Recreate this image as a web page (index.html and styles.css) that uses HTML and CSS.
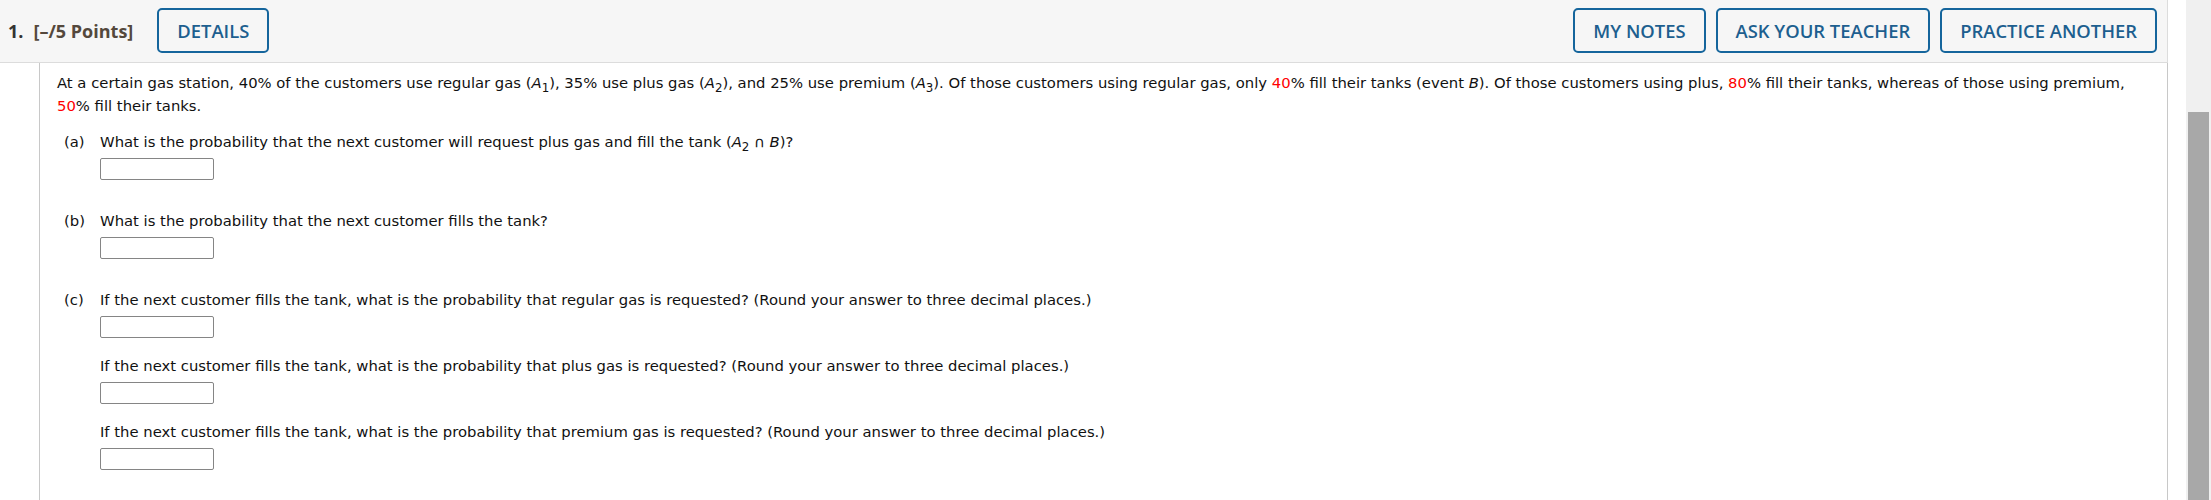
FILE: index.html
```html
<!DOCTYPE html>
<html>
<head>
<meta charset="utf-8">
<link rel="stylesheet" href="styles.css">
</head>
<body>
<div class="screen">
  <div class="page">
    <div class="header">
      <div class="title"><span class="num">1.</span><span class="pts">[–/5 Points]</span></div>
      <button class="btn">DETAILS</button>
      <div class="spacer"></div>
      <div class="actions">
        <button class="btn">MY NOTES</button>
        <button class="btn">ASK YOUR TEACHER</button>
        <button class="btn">PRACTICE ANOTHER</button>
      </div>
    </div>
    <div class="content">
      <p class="intro">At a certain gas station, 40% of the customers use regular gas (<i>A</i><sub>1</sub>), 35% use plus gas (<i>A</i><sub>2</sub>), and 25% use premium (<i>A</i><sub>3</sub>). Of those customers using regular gas, only <span class="red">40</span>% fill their tanks (event <i>B</i>). Of those customers using plus, <span class="red">80</span>% fill their tanks, whereas of those using premium, <span class="red">50</span>% fill their tanks.</p>
      <div class="part first">
        <div class="label">(a)</div>
        <div class="body">
          <div class="q">What is the probability that the next customer will request plus gas and fill the tank (<i>A</i><sub>2</sub> ∩ <i>B</i>)?</div>
          <div class="answer"></div>
        </div>
      </div>
      <div class="part">
        <div class="label">(b)</div>
        <div class="body">
          <div class="q">What is the probability that the next customer fills the tank?</div>
          <div class="answer"></div>
        </div>
      </div>
      <div class="part">
        <div class="label">(c)</div>
        <div class="body">
          <div class="q">If the next customer fills the tank, what is the probability that regular gas is requested? (Round your answer to three decimal places.)</div>
          <div class="answer"></div>
          <div class="q sub">If the next customer fills the tank, what is the probability that plus gas is requested? (Round your answer to three decimal places.)</div>
          <div class="answer"></div>
          <div class="q sub">If the next customer fills the tank, what is the probability that premium gas is requested? (Round your answer to three decimal places.)</div>
          <div class="answer"></div>
        </div>
      </div>
    </div>
  </div>
  <div class="gutter"></div>
  <div class="scrollbar"><div class="thumb"></div></div>
</div>
</body>
</html>
```
FILE: styles.css
```css
* { box-sizing: border-box; }
html, body { margin: 0; padding: 0; height: 500px; overflow: hidden; background: #fff; }
.screen { display: flex; height: 500px; }
.page { width: 2168px; flex: none; }
.header {
  display: flex;
  align-items: center;
  height: 63px;
  padding: 0 10px 1px 8px;
  background: #f6f6f6;
  border-bottom: 1px solid #dcdcdc;
  border-right: 1px solid #dcdcdc;
  font-family: "Open Sans", sans-serif;
}
.title { font-weight: 700; font-size: 18px; display: flex; gap: 10px; margin-right: 24px; }
.num { color: #333; }
.pts { color: #54483c; }
.spacer { flex: 1; }
.actions { display: flex; gap: 10px; }
.btn {
  height: 45px;
  padding: 0 18px;
  border: 2px solid #15659c;
  border-radius: 5px;
  background: transparent;
  color: #1d5f8f;
  font-family: "Open Sans", sans-serif;
  font-weight: 600;
  font-size: 18.4px;
}
.content {
  height: 437px;
  margin-left: 39px;
  border-left: 1px solid #c8c8c8;
  border-right: 1px solid #c8c8c8;
  padding: 8px 10px 0 17px;
  font-family: "DejaVu Sans", Verdana, sans-serif;
  font-size: 14.8px;
  line-height: 23px;
  color: #111;
}
.intro { margin: 0; }
.red { color: #ff0000; }
sub { font-size: 0.8em; vertical-align: -0.35em; line-height: 0; }
.part { display: flex; padding-left: 7px; margin-top: 29px; }
.part.first { margin-top: 13px; }
.label { width: 36px; flex: none; }
.body { flex: 1; }
.answer {
  width: 114px;
  height: 22px;
  margin-top: 5px;
  border: 1px solid #858585;
  border-radius: 2px;
  background: #fff;
}
.q.sub { margin-top: 16px; }
.gutter { width: 18px; flex: none; background: #fff; }
.scrollbar { width: 25px; flex: none; background: #f0f0f0; padding: 112px 2px 0 2px; }
.thumb { height: 388px; background: #a8a8a8; }
```
